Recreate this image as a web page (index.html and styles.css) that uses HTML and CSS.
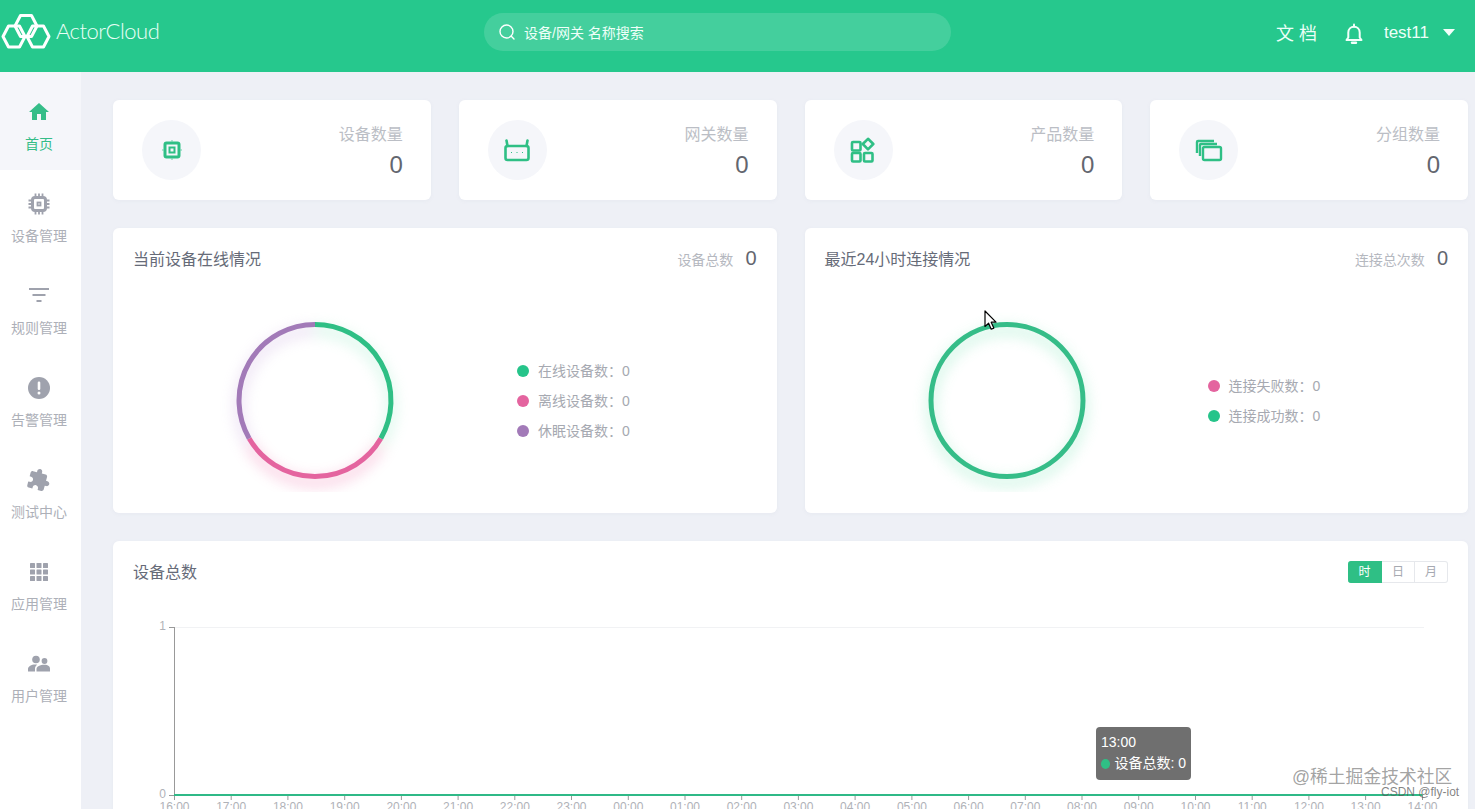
FILE: index.html
```html
<!DOCTYPE html>
<html lang="zh">
<head>
<meta charset="utf-8">
<title>ActorCloud</title>
<link rel="stylesheet" href="styles.css">
</head>
<body>
<div class="app">
  <header class="topbar">
    <div class="brand">
      <svg class="brand-mark" width="50" height="36" viewBox="0 0 50 36" fill="none" stroke="#fff" stroke-width="3" stroke-linejoin="round">
        <path d="M7.500 13h11l5.500 10.500-5.500 10.500h-11L2 23.500z"/>
        <path d="M19.500 2.500h11L36 13l-5.500 10.500h-11L14 13z"/>
        <path d="M31.500 13h11L48 23.500 42.500 34h-11L26 23.500z"/>
      </svg>
      <span class="brand-name">ActorCloud</span>
    </div>
    <div class="search">
      <svg width="18" height="18" viewBox="0 0 18 18" fill="none" stroke="#fff" stroke-width="1.400" stroke-linecap="round"><circle cx="8.500" cy="8.500" r="6.500"/><path d="M13.300 13.300l2.700 2.700"/></svg>
      <span>设备/网关 名称搜索</span>
    </div>
    <div class="top-actions">
      <span class="doc-link">文 档</span>
      <svg class="bell" width="20" height="22" viewBox="0 0 20 22" fill="none" stroke="#f2fffa" stroke-width="2" stroke-linejoin="round"><path d="M2.500 17h15l-1.800-2.500V9.500c0-3.300-2.400-5.700-5.700-5.700s-5.700 2.400-5.700 5.700v5z"/><path d="M10 1.500v2" stroke-linecap="round"/><path d="M8 19.800h4" stroke-width="2.400" stroke-linecap="round"/></svg>
      <span class="user">test11</span>
      <span class="caret"></span>
    </div>
  </header>
  <div class="layout">
    <nav class="sidebar">
      <a class="nav-item nav-item-active">
        <svg class="nav-icon" viewBox="0 0 24 24" fill="currentColor"><path d="M10 20v-6h4v6h5v-8h3L12 3 2 12h3v8z"/></svg>
        <span>首页</span>
      </a>
      <a class="nav-item">
        <svg class="nav-icon" viewBox="0 0 24 24" fill="none" stroke="currentColor" stroke-width="3"><rect x="5.500" y="5.500" width="13" height="13" rx="2.500"/><rect x="10.500" y="10.500" width="3" height="3" stroke-width="1.800"/><path d="M8.500 1.500v3M12 1.500v3M15.500 1.500v3M8.500 19.500v3M12 19.500v3M15.500 19.500v3M1.500 8.500h3M1.500 12h3M1.500 15.500h3M19.500 8.500h3M19.500 12h3M19.500 15.500h3" stroke-width="1.800"/></svg>
        <span>设备管理</span>
      </a>
      <a class="nav-item">
        <svg class="nav-icon" viewBox="0 0 24 24" fill="currentColor"><rect x="2" y="4" width="20" height="2"/><rect x="5.500" y="10" width="13" height="2"/><rect x="9.500" y="16" width="5" height="2"/></svg>
        <span>规则管理</span>
      </a>
      <a class="nav-item">
        <svg class="nav-icon" viewBox="0 0 24 24"><circle cx="12" cy="12" r="11" fill="currentColor"/><rect x="10.700" y="5.500" width="2.600" height="8.500" rx="1.200" fill="#fff"/><circle cx="12" cy="17" r="1.500" fill="#fff"/></svg>
        <span>告警管理</span>
      </a>
      <a class="nav-item">
        <svg class="nav-icon nav-icon-tilt" viewBox="0 0 24 24" fill="currentColor"><path d="M20.500 11H19V7c0-1.100-.9-2-2-2h-4V3.500C13 2.120 11.880 1 10.500 1S8 2.120 8 3.500V5H4c-1.100 0-1.990.9-1.990 2v3.800H3.500c1.490 0 2.700 1.210 2.700 2.700s-1.210 2.700-2.700 2.700H2V20c0 1.100.9 2 2 2h3.800v-1.500c0-1.490 1.210-2.700 2.700-2.700 1.490 0 2.700 1.210 2.700 2.700V22H17c1.100 0 2-.9 2-2v-4h1.500c1.380 0 2.500-1.120 2.500-2.500S21.880 11 20.500 11z"/></svg>
        <span>测试中心</span>
      </a>
      <a class="nav-item">
        <svg class="nav-icon" viewBox="0 0 24 24" fill="currentColor"><rect x="3" y="3" width="5" height="5" rx=".6"/><rect x="9.500" y="3" width="5" height="5" rx=".6"/><rect x="16" y="3" width="5" height="5" rx=".6"/><rect x="3" y="9.500" width="5" height="5" rx=".6"/><rect x="9.500" y="9.500" width="5" height="5" rx=".6"/><rect x="16" y="9.500" width="5" height="5" rx=".6"/><rect x="3" y="16" width="5" height="5" rx=".6"/><rect x="9.500" y="16" width="5" height="5" rx=".6"/><rect x="16" y="16" width="5" height="5" rx=".6"/></svg>
        <span>应用管理</span>
      </a>
      <a class="nav-item">
        <svg class="nav-icon" viewBox="0 0 24 24" fill="currentColor"><circle cx="9" cy="7.500" r="3.800"/><circle cx="17.500" cy="9" r="2.900"/><path d="M1 19.500v-2.500c0-2.500 3.500-4.500 7-4.500 .8 0 1.500.1 2.200.3-1.400 1-2.200 2.300-2.200 3.700v3z"/><path d="M9.500 19.500V17c0-2.400 3.700-4.200 7.800-4.200S23 14.600 23 17v2.500z"/></svg>
        <span>用户管理</span>
      </a>
    </nav>
    <main class="content">
      <section class="stats">
        <div class="card stat">
          <div class="stat-icon">
            <svg width="24" height="24" viewBox="0 0 24 24" fill="none" stroke="#2fbf85" stroke-width="2"><rect x="5" y="5" width="14" height="14" rx="1.500" stroke-width="3"/><rect x="9.500" y="9.500" width="5" height="5"/><path d="M12 2v1.500M12 20.500V22M2 12h1.500M20.500 12H22" stroke-width=".7"/></svg>
          </div>
          <div class="stat-text"><div class="stat-label">设备数量</div><div class="stat-value">0</div></div>
        </div>
        <div class="card stat">
          <div class="stat-icon">
            <svg width="28" height="26" viewBox="0 0 28 26" fill="none" stroke="#2fbf85" stroke-width="2.600" stroke-linejoin="round"><rect x="2.500" y="9" width="23" height="14" rx="2"/><path d="M4.500 9L3.500 3.500M23.500 9l1-5.500" stroke-linecap="round"/><path d="M8 15.500h1M13.500 15.500h1M19 15.500h1" stroke-width="1.200"/></svg>
          </div>
          <div class="stat-text"><div class="stat-label">网关数量</div><div class="stat-value">0</div></div>
        </div>
        <div class="card stat">
          <div class="stat-icon">
            <svg width="26" height="26" viewBox="0 0 26 26" fill="none" stroke="#2fbf85" stroke-width="2.600" stroke-linejoin="round"><rect x="2" y="5" width="8.500" height="8.500" rx="1"/><rect x="2" y="16" width="8.500" height="8.500" rx="1"/><rect x="14" y="16" width="8.500" height="8.500" rx="1"/><path d="M18 1.800l5.300 5.200-5.300 5.300-5.200-5.300z"/></svg>
          </div>
          <div class="stat-text"><div class="stat-label">产品数量</div><div class="stat-value">0</div></div>
        </div>
        <div class="card stat">
          <div class="stat-icon">
            <svg width="28" height="24" viewBox="0 0 28 24" fill="none" stroke="#2fbf85" stroke-width="2.400" stroke-linejoin="round"><path d="M19 3H3a1 1 0 0 0-1 1v11"/><path d="M22 6H6a1 1 0 0 0-1 1v11"/><rect x="8" y="9" width="18" height="13" rx="1.500"/></svg>
          </div>
          <div class="stat-text"><div class="stat-label">分组数量</div><div class="stat-value">0</div></div>
        </div>
      </section>

      <section class="panels">
        <div class="card panel">
          <div class="panel-head">
            <h2 class="panel-title">当前设备在线情况</h2>
            <div class="panel-total"><span>设备总数</span><b>0</b></div>
          </div>
          <div class="panel-body">
            <svg class="donut" width="240" height="184" viewBox="0 0 240 184" fill="none" stroke-width="5">
              <defs><filter id="glow1" x="-30%" y="-30%" width="160%" height="160%"><feGaussianBlur stdDeviation="7"/></filter></defs>
              <g filter="url(#glow1)" opacity=".34" transform="translate(0 6)" stroke-width="9">
                <path d="M120 16.500A76 76 0 0 1 185.800 130.500" stroke="#8ee8c0"/>
                <path d="M185.800 130.500A76 76 0 0 1 54.200 130.500" stroke="#ee6fa8"/>
                <path d="M54.200 130.500A76 76 0 0 1 120 16.500" stroke="#c6a6dc"/>
              </g>
              <path d="M120 16.500A76 76 0 0 1 185.800 130.500" stroke="#2fbf85"/>
              <path d="M185.800 130.500A76 76 0 0 1 54.200 130.500" stroke="#e4649f"/>
              <path d="M54.200 130.500A76 76 0 0 1 120 16.500" stroke="#a27ab8"/>
            </svg>
            <ul class="legend">
              <li><i class="dot dot-green"></i>在线设备数&#xFF1A;0</li>
              <li><i class="dot dot-pink"></i>离线设备数&#xFF1A;0</li>
              <li><i class="dot dot-purple"></i>休眠设备数&#xFF1A;0</li>
            </ul>
          </div>
        </div>
        <div class="card panel">
          <div class="panel-head">
            <h2 class="panel-title">最近24小时连接情况</h2>
            <div class="panel-total"><span>连接总次数</span><b>0</b></div>
          </div>
          <div class="panel-body">
            <svg class="donut" width="240" height="184" viewBox="0 0 240 184" fill="none" stroke-width="5">
              <defs><filter id="glow2" x="-30%" y="-30%" width="160%" height="160%"><feGaussianBlur stdDeviation="7"/></filter></defs>
              <circle cx="120" cy="98.500" r="76" stroke="#8ee8c0" stroke-width="9" opacity=".42" filter="url(#glow2)"/>
              <circle cx="120" cy="92.500" r="76" stroke="#35bd88"/>
            </svg>
            <ul class="legend legend-near">
              <li><i class="dot dot-pink"></i>连接失败数&#xFF1A;0</li>
              <li><i class="dot dot-green"></i>连接成功数&#xFF1A;0</li>
            </ul>
          </div>
        </div>
      </section>

      <section class="card chart-panel">
        <div class="panel-head">
          <h2 class="panel-title">设备总数</h2>
          <div class="segment">
            <span class="segment-item segment-on">时</span>
            <span class="segment-item">日</span>
            <span class="segment-item">月</span>
          </div>
        </div>
        <svg class="chart" width="1355" height="224" viewBox="0 0 1355 224">
          <path class="chart-grid" d="M61 24.500H1311"/>
          <path class="chart-axis" d="M61.500 24V192.500M56 24.500H61.500M56 192.500H61.500"/>
          <text class="chart-label" x="53" y="27" text-anchor="end">1</text>
          <text class="chart-label" x="53" y="195" text-anchor="end">0</text>
          <g class="chart-ticks">
            <path class="chart-axis" d="M61.500 192v5M118.200 192v5M174.900 192v5M231.700 192v5M288.400 192v5M345.100 192v5M401.800 192v5M458.500 192v5M515.300 192v5M572 192v5M628.700 192v5M685.400 192v5M742.100 192v5M798.900 192v5M855.600 192v5M912.300 192v5M969 192v5M1025.700 192v5M1082.500 192v5M1139.200 192v5M1195.900 192v5M1252.600 192v5M1309.500 192v5"/>
          </g>
          <path class="chart-line" d="M61 192H1309.500"/>
          <g class="chart-label" text-anchor="middle">
            <text x="61.500" y="208">16:00</text><text x="118.200" y="208">17:00</text><text x="174.900" y="208">18:00</text><text x="231.700" y="208">19:00</text><text x="288.400" y="208">20:00</text><text x="345.100" y="208">21:00</text><text x="401.800" y="208">22:00</text><text x="458.500" y="208">23:00</text><text x="515.300" y="208">00:00</text><text x="572" y="208">01:00</text><text x="628.700" y="208">02:00</text><text x="685.400" y="208">03:00</text><text x="742.100" y="208">04:00</text><text x="798.900" y="208">05:00</text><text x="855.600" y="208">06:00</text><text x="912.300" y="208">07:00</text><text x="969" y="208">08:00</text><text x="1025.700" y="208">09:00</text><text x="1082.500" y="208">10:00</text><text x="1139.200" y="208">11:00</text><text x="1195.900" y="208">12:00</text><text x="1252.600" y="208">13:00</text><text x="1309.500" y="208">14:00</text>
          </g>
        </svg>
        <div class="tooltip">
          <div>13:00</div>
          <div class="tooltip-row"><i class="dot-small"></i>设备总数: 0</div>
        </div>
      </section>
    </main>
  </div>
  <svg class="cursor" width="14" height="21" viewBox="0 0 14 21"><path d="M1 1v15.500l3.600-3.300 2.600 6 2.600-1.100-2.600-5.900H12z" fill="#fff" stroke="#000" stroke-width="1.200" stroke-linejoin="round"/></svg>
  <div class="mark-juejin">@稀土掘金技术社区</div>
  <div class="mark-csdn">CSDN @fly-iot</div>
</div>
</body>
</html>
```
FILE: styles.css
```css
* { box-sizing: border-box; }
html, body { margin: 0; height: 100%; overflow: hidden; }
body {
  font-family: "Liberation Sans", "Noto Sans CJK SC", sans-serif;
  color: #5c6270;
  background: #eef0f6;
}
.app { position: relative; height: 809px; overflow: hidden; }

.topbar {
  height: 72px;
  background: #26c88d;
  color: #fff;
  display: flex;
  align-items: center;
  padding: 0 20px 8px 0;
}
.brand { width: 484px; display: flex; align-items: center; padding-left: 1px; }
.brand-mark { display: block; margin-top: -3px; }
.brand-name {
  margin: -4px 0 0 5px;
  font-family: Lato, sans-serif;
  font-weight: 300;
  font-size: 22px;
  letter-spacing: -.5px;
  color: #eafff7;
}
.search {
  width: 467px;
  height: 38px;
  border-radius: 19px;
  background: rgba(255, 255, 255, .14);
  display: flex;
  align-items: center;
  gap: 8px;
  padding-left: 14px;
  font-size: 14px;
  color: #effff9;
}
.top-actions { margin-left: auto; display: flex; align-items: center; color: #ecfff8; }
.doc-link { font-size: 18px; }
.bell { margin-left: 27px; margin-top: 3px; }
.user { font-size: 17px; margin-left: 20px; margin-top: 2px; }
.caret {
  margin-left: 14px;
  width: 0;
  height: 0;
  border-left: 6px solid transparent;
  border-right: 6px solid transparent;
  border-top: 7px solid #f4fffb;
}

.layout { display: flex; height: 737px; }
.sidebar {
  width: 81px;
  flex: none;
  background: #fff;
  display: flex;
  flex-direction: column;
}
.nav-item {
  height: 92px;
  padding: 22px 3px 0 0;
  display: flex;
  flex-direction: column;
  align-items: center;
  font-size: 14px;
  line-height: 20px;
  color: #adb0b8;
}
.nav-icon { width: 24px; height: 24px; margin-bottom: 10px; color: #9fa2ad; display: block; }
.nav-icon-tilt { transform: rotate(15deg); }
.nav-item-active {
  height: 98px;
  padding-top: 28px;
  background: #f5f6fa;
  color: #35bd88;
}
.nav-item-active .nav-icon { color: #35bd88; }

.content { flex: 1; min-width: 0; padding: 28px 7px 0 32px; }
.card { background: #fff; border-radius: 6px; box-shadow: 0 1px 4px rgba(120, 130, 160, .06); }

.stats { display: flex; gap: 28px; }
.stat {
  flex: 1;
  height: 100px;
  padding: 20px 28px 20px 29px;
  display: flex;
  justify-content: space-between;
}
.stat-icon {
  width: 59px;
  height: 60px;
  border-radius: 50%;
  background: #f5f6fa;
  display: flex;
  align-items: center;
  justify-content: center;
}
.stat-text { text-align: right; }
.stat-label { font-size: 16px; line-height: 24px; margin-top: 3px; color: #bbbec5; }
.stat-value { font-size: 24px; line-height: 30px; margin-top: 3px; color: #63666f; }

.panels { display: flex; gap: 28px; margin-top: 28px; }
.panel { flex: 1; height: 285px; padding: 20px 20px 21px 20px; }
.panel-head { display: flex; align-items: center; justify-content: space-between; height: 22px; }
.panel-title { margin: 2px 0 0; font-size: 16px; font-weight: 400; line-height: 22px; color: #666b78; }
.panel-total { display: flex; align-items: center; margin-top: -1px; font-size: 14px; color: #b5b8bf; }
.panel-total b { font-size: 20px; font-weight: 400; margin-left: 12px; color: #63666f; }
.panel-body { display: flex; align-items: center; margin-top: 38px; padding-left: 62px; height: 184px; }
.donut { display: block; flex: none; }
.legend { list-style: none; margin: 2px 0 0 82px; padding: 0; font-size: 14px; line-height: 30px; color: #a6a9b1; }
.legend-near { margin-left: 81px; }
.legend li { display: flex; align-items: center; }
.dot { width: 12px; height: 12px; border-radius: 50%; margin-right: 9px; }
.dot-green { background: #26c48a; }
.dot-pink { background: #e4649f; }
.dot-purple { background: #a27ab8; }

.chart-panel { position: relative; margin-top: 28px; height: 300px; padding-top: 20px; }
.chart-panel .panel-head { padding: 0 20px; }
.segment { display: flex; height: 22px; }
.segment-item {
  width: 33px;
  border: 1px solid #e6e8ec;
  border-left: 0;
  font-size: 12px;
  line-height: 20px;
  text-align: center;
  color: #a6a9b1;
}
.segment-item:last-child { border-radius: 0 3px 3px 0; }
.segment-on { width: 34px; background: #2fbf85; border-color: #2fbf85; color: #fff; border-radius: 3px 0 0 3px; }
.chart { display: block; margin-top: 20px; }
.chart-grid { stroke: #f1f2f4; fill: none; }
.chart-axis { stroke: #999; fill: none; }
.chart-line { stroke: #2fb987; stroke-width: 2; fill: none; }
.chart-label { font-size: 12px; fill: #b0b2b8; }

.tooltip {
  position: absolute;
  left: 983px;
  top: 186px;
  width: 95px;
  height: 53px;
  padding: 5px;
  border-radius: 4px;
  background: #6f6f6f;
  color: #fff;
  font-size: 14px;
  line-height: 21px;
}
.tooltip-row { display: flex; align-items: center; white-space: nowrap; }
.dot-small { width: 10px; height: 10px; border-radius: 50%; background: #2fbf85; margin-right: 4px; }

.cursor { position: absolute; left: 984px; top: 310px; }
.mark-juejin { position: absolute; left: 1292px; top: 765px; font-size: 17.800px; line-height: 24px; color: rgba(110, 110, 110, .65); white-space: nowrap; }
.mark-csdn { position: absolute; left: 1381px; top: 785px; font-size: 12px; line-height: 14px; color: rgba(90, 90, 90, .75); white-space: nowrap; }
```
